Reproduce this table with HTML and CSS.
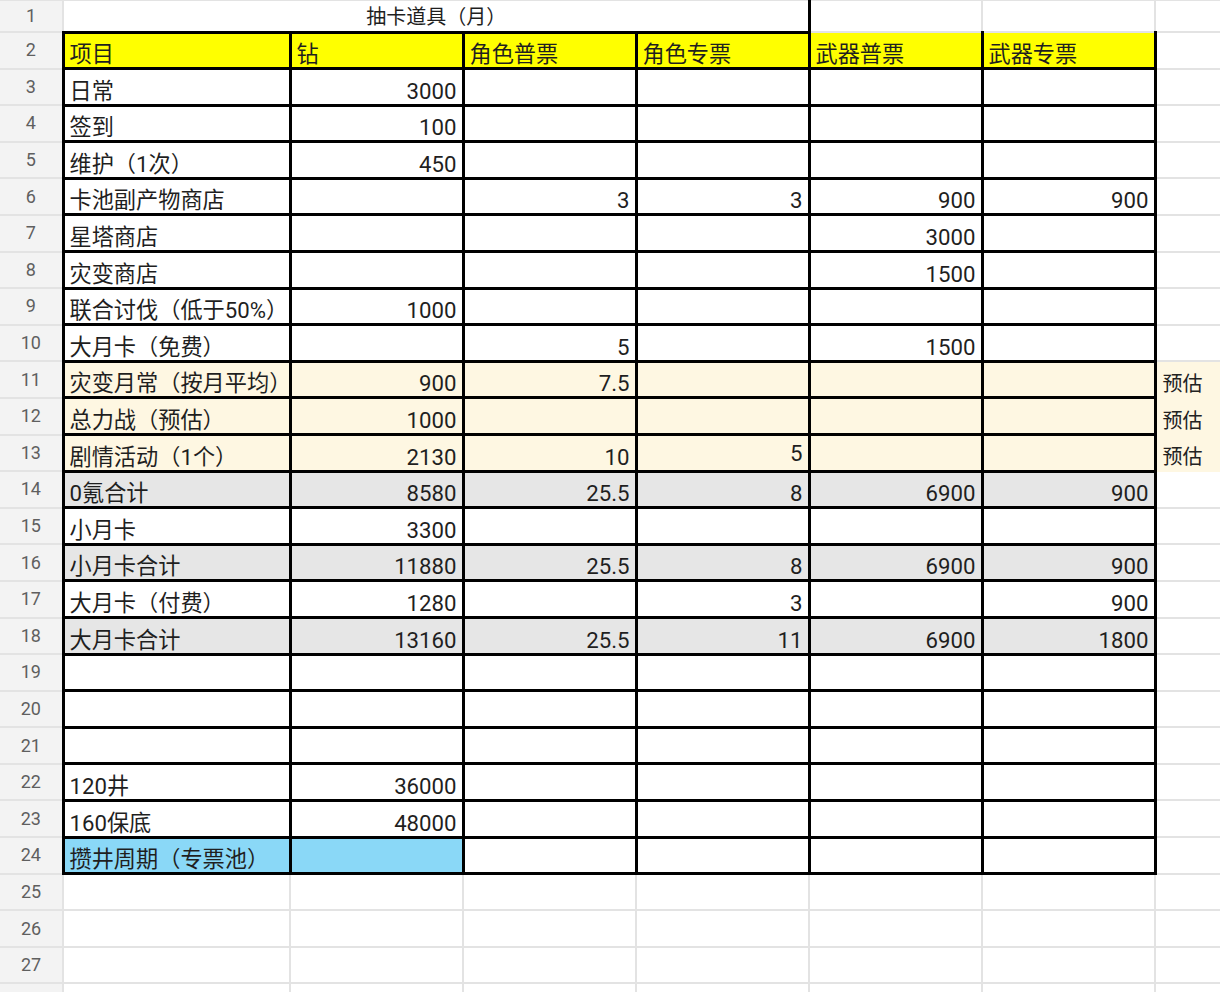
FILE: index.html
```html
<!DOCTYPE html>
<html lang="zh">
<head>
<meta charset="utf-8">
<title>抽卡道具（月）</title>
<link rel="stylesheet" href="styles.css">
</head>
<body>
<div class="sheet">
<table class="grid">
<colgroup>
<col class="c-hd"><col class="c-a"><col class="c-n"><col class="c-n"><col class="c-n"><col class="c-n"><col class="c-n"><col class="c-n">
</colgroup>
<tbody>
<tr class="r1"><td class="rh">1</td><td class="title bt-r" colspan="4">抽卡道具（月）</td><td></td><td></td><td></td></tr>
<tr class="r"><td class="rh">2</td><td class="hdr b bt bl">项目</td><td class="hdr b bt">钻</td><td class="hdr b bt">角色普票</td><td class="hdr b bt">角色专票</td><td class="hdr b">武器普票</td><td class="hdr b">武器专票</td><td></td></tr>
<tr class="r"><td class="rh">3</td><td class="b bl">日常</td><td class="b n">3000</td><td class="b"></td><td class="b"></td><td class="b"></td><td class="b"></td><td></td></tr>
<tr class="r"><td class="rh">4</td><td class="b bl">签到</td><td class="b n">100</td><td class="b"></td><td class="b"></td><td class="b"></td><td class="b"></td><td></td></tr>
<tr class="r"><td class="rh">5</td><td class="b bl">维护（1次）</td><td class="b n">450</td><td class="b"></td><td class="b"></td><td class="b"></td><td class="b"></td><td></td></tr>
<tr class="r"><td class="rh">6</td><td class="b bl">卡池副产物商店</td><td class="b n"></td><td class="b n">3</td><td class="b n">3</td><td class="b n">900</td><td class="b n">900</td><td></td></tr>
<tr class="r"><td class="rh">7</td><td class="b bl">星塔商店</td><td class="b"></td><td class="b"></td><td class="b"></td><td class="b n">3000</td><td class="b"></td><td></td></tr>
<tr class="r"><td class="rh">8</td><td class="b bl">灾变商店</td><td class="b"></td><td class="b"></td><td class="b"></td><td class="b n">1500</td><td class="b"></td><td></td></tr>
<tr class="r"><td class="rh">9</td><td class="b bl">联合讨伐（低于50%）</td><td class="b n">1000</td><td class="b"></td><td class="b"></td><td class="b"></td><td class="b"></td><td></td></tr>
<tr class="r"><td class="rh">10</td><td class="b bl">大月卡（免费）</td><td class="b"></td><td class="b n">5</td><td class="b"></td><td class="b n">1500</td><td class="b"></td><td></td></tr>
<tr class="r cream"><td class="rh">11</td><td class="b bl">灾变月常（按月平均）</td><td class="b n">900</td><td class="b n">7.5</td><td class="b"></td><td class="b"></td><td class="b"></td><td class="note">预估</td></tr>
<tr class="r cream"><td class="rh">12</td><td class="b bl">总力战（预估）</td><td class="b n">1000</td><td class="b"></td><td class="b"></td><td class="b"></td><td class="b"></td><td class="note">预估</td></tr>
<tr class="r cream"><td class="rh">13</td><td class="b bl">剧情活动（1个）</td><td class="b n">2130</td><td class="b n">10</td><td class="b n mid">5</td><td class="b"></td><td class="b"></td><td class="note">预估</td></tr>
<tr class="r total"><td class="rh">14</td><td class="b bl">0氪合计</td><td class="b n">8580</td><td class="b n">25.5</td><td class="b n">8</td><td class="b n">6900</td><td class="b n">900</td><td class="plain"></td></tr>
<tr class="r"><td class="rh">15</td><td class="b bl">小月卡</td><td class="b n">3300</td><td class="b"></td><td class="b"></td><td class="b"></td><td class="b"></td><td></td></tr>
<tr class="r total"><td class="rh">16</td><td class="b bl">小月卡合计</td><td class="b n">11880</td><td class="b n">25.5</td><td class="b n">8</td><td class="b n">6900</td><td class="b n">900</td><td class="plain"></td></tr>
<tr class="r"><td class="rh">17</td><td class="b bl">大月卡（付费）</td><td class="b n">1280</td><td class="b"></td><td class="b n">3</td><td class="b"></td><td class="b n">900</td><td></td></tr>
<tr class="r total"><td class="rh">18</td><td class="b bl">大月卡合计</td><td class="b n">13160</td><td class="b n">25.5</td><td class="b n">11</td><td class="b n">6900</td><td class="b n">1800</td><td class="plain"></td></tr>
<tr class="r"><td class="rh">19</td><td class="b bl"></td><td class="b"></td><td class="b"></td><td class="b"></td><td class="b"></td><td class="b"></td><td></td></tr>
<tr class="r"><td class="rh">20</td><td class="b bl"></td><td class="b"></td><td class="b"></td><td class="b"></td><td class="b"></td><td class="b"></td><td></td></tr>
<tr class="r"><td class="rh">21</td><td class="b bl"></td><td class="b"></td><td class="b"></td><td class="b"></td><td class="b"></td><td class="b"></td><td></td></tr>
<tr class="r"><td class="rh">22</td><td class="b bl">120井</td><td class="b n">36000</td><td class="b"></td><td class="b"></td><td class="b"></td><td class="b"></td><td></td></tr>
<tr class="r"><td class="rh">23</td><td class="b bl">160保底</td><td class="b n">48000</td><td class="b"></td><td class="b"></td><td class="b"></td><td class="b"></td><td></td></tr>
<tr class="r"><td class="rh">24</td><td class="b bl blue">攒井周期（专票池）</td><td class="b blue"></td><td class="b"></td><td class="b"></td><td class="b"></td><td class="b"></td><td></td></tr>
<tr class="r"><td class="rh">25</td><td></td><td></td><td></td><td></td><td></td><td></td><td></td></tr>
<tr class="r"><td class="rh">26</td><td></td><td></td><td></td><td></td><td></td><td></td><td></td></tr>
<tr class="r"><td class="rh">27</td><td></td><td></td><td></td><td></td><td></td><td></td><td></td></tr>
<tr class="r"><td class="rh"></td><td></td><td></td><td></td><td></td><td></td><td></td><td></td></tr>
</tbody>
</table>
</div>
</body>
</html>
```

FILE: styles.css
```css
html, body {
  margin: 0;
  padding: 0;
  background: #ffffff;
}

.sheet {
  width: 1220px;
  height: 992px;
  overflow: hidden;
}

.grid {
  border-collapse: collapse;
  table-layout: fixed;
  width: 1328px;
  margin-top: -1px;
  font-family: "Roboto", "Noto Sans CJK SC", sans-serif;
  font-size: 22.2px;
  color: #1f1f1f;
}

.c-hd { width: 63px; }
.c-a { width: 227px; }
.c-n { width: 173px; }

.grid td {
  border: 2px solid #e3e3e3;
  padding: 0 4px 0 5px;
  vertical-align: bottom;
  white-space: nowrap;
  line-height: 26px;
}

.r1 { height: 32px; }
.r { height: 36.6px; }

.grid td.rh {
  background: #f3f3f3;
  color: #5f5f5f;
  font-size: 18px;
  text-align: center;
  vertical-align: middle;
  padding: 0;
  border-left: none;
  border-color: #e3e3e3;
}

.grid td.title {
  text-align: center;
  font-size: 20px;
  padding-bottom: 2px;
  line-height: 24px;
}

.grid td.bt-r {
  border-right: 3px solid #000;
  border-bottom: 3px solid #000;
}

.grid td.b {
  border: 3px solid #000;
}

.grid td.n {
  text-align: right;
  padding-right: 5px;
}

.grid td.mid {
  vertical-align: middle;
}

.hdr {
  background: #ffff00;
}

.grid tr:nth-child(2) td.hdr:nth-child(6),
.grid tr:nth-child(2) td.hdr:nth-child(7) {
  border-top-color: #e3e3e3;
  border-top-width: 2px;
}

.cream td {
  background: #fef7e2;
}

.cream td.note {
  font-size: 20px;
  border-top-color: #fef7e2;
  border-bottom-color: #fef7e2;
  border-right-color: #fef7e2;
  color: #222;
  padding-left: 6px;
}

.total td {
  background: #e6e6e6;
}

.grid tr td.rh {
  background: #f3f3f3;
}

.grid .total td.plain {
  background: #ffffff;
}

.grid td.blue {
  background: #8ad8f7;
}
```
